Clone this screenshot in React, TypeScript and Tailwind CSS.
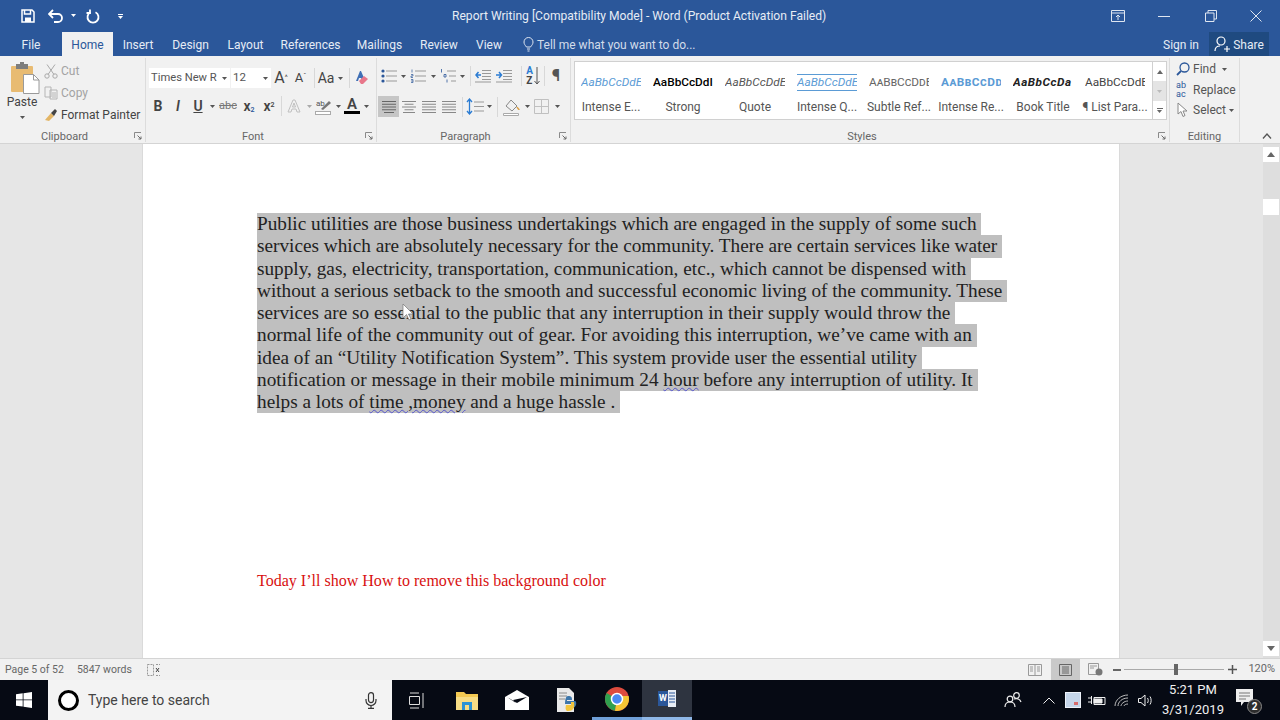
import type { ReactNode } from 'react';

const UI = "font-['Roboto','Liberation_Sans',sans-serif]";

/** tiny dropdown caret */
function Drop({ color = '#555' }: { color?: string }) {
  return (
    <svg width="5" height="3" viewBox="0 0 5 3">
      <path d="M0 0h5L2.5 3z" fill={color} />
    </svg>
  );
}

/** fixed-width cell, keeps toolbar items centred on their column */
function Slot({ w, children, className = '' }: { w: string; children?: ReactNode; className?: string }) {
  return <div className={`${w} h-[20px] flex items-center justify-center shrink-0 ${className}`}>{children}</div>;
}

function Sep() {
  return <div className="w-px h-[20px] bg-[#d8d8d8] shrink-0" />;
}

function Launcher() {
  return (
    <svg width="8" height="8" viewBox="0 0 8 8" className="absolute right-[3px] bottom-[2px]" fill="none" stroke="#8a8a8a">
      <path d="M.5 6V.5H7" />
      <path d="M3.5 3.500L7 7M7 4.500V7H4.500" stroke="#6a6a6a" />
    </svg>
  );
}

function Group({ w, label, children, launcher = true }: { w: string; label: string; children: ReactNode; launcher?: boolean }) {
  return (
    <div className={`${w} h-[84px] relative flex flex-col border-r border-[#dcdcdc] shrink-0`}>
      <div className="h-[70px] shrink-0">{children}</div>
      <div className={`text-center text-[11px] leading-[16px] pt-[1px] text-[#666] ${launcher ? 'pr-[16px]' : ''}`}>{label}</div>
      {launcher && <Launcher />}
    </div>
  );
}

function Lines({ widths, color = '#888' }: { widths: number[]; color?: string }) {
  return (
    <svg width="14" height="14" viewBox="0 0 14 14" stroke={color} fill="none">
      {widths.map((w, i) => (
        <path key={i} d={`M${(14 - w) / 2} ${1.5 + (i * 11) / (widths.length - 1)}h${w}`} />
      ))}
    </svg>
  );
}

function ListIcon({ kind }: { kind: 'bullet' | 'number' | 'multi' }) {
  return (
    <svg width="16" height="14" viewBox="0 0 16 14" fill="none" stroke="#999">
      <path d={kind === 'multi' ? 'M7 2h9M9 7h7M11 12h5' : 'M5 2h11M5 7h11M5 12h11'} />
      {kind === 'bullet' && (
        <g fill="#2b579a" stroke="none">
          <circle cx="2" cy="2" r="1.6" />
          <circle cx="2" cy="7" r="1.6" />
          <circle cx="2" cy="12" r="1.6" />
        </g>
      )}
      {kind === 'number' && (
        <g stroke="#2b579a">
          <path d="M2 .5v3M1 5.500h2v1.500h-2v1.500h2M1 10.500h2v3h-2M1 12h2" strokeWidth=".7" />
        </g>
      )}
      {kind === 'multi' && (
        <g stroke="#2b579a" strokeWidth=".8">
          <path d="M1.500 0v3.500M4 5.500h2v2.500h-2zM7 10.500v3" />
        </g>
      )}
    </svg>
  );
}

function PasteIcon() {
  return (
    <svg width="30" height="32" viewBox="0 0 30 32">
      <rect x="1" y="4" width="22" height="26" rx="1" fill="#e8bb72" />
      <rect x="6" y="2" width="12" height="5" fill="#7d7d7d" />
      <rect x="10" y="0" width="4" height="3" fill="#7d7d7d" />
      <path d="M13.500 12.500h10l5.500 5.500v13.500h-15.500z" fill="#fff" stroke="#9a9a9a" />
      <path d="M23.500 12.500v5.500h5.500" fill="none" stroke="#9a9a9a" />
    </svg>
  );
}

function Clipboard() {
  return (
    <div className="flex h-full">
      <div className="w-[44px] flex flex-col items-center pt-[4px] shrink-0">
        <div className="h-[32px] pl-[6px]">
          <PasteIcon />
        </div>
        <div className="text-[12px] leading-[16px] text-[#444]">Paste</div>
        <div className="mt-[6px]">
          <Drop />
        </div>
      </div>
      <div className="flex flex-col pt-[2px] text-[12px] leading-[22px]">
        <div className="flex items-center text-[#a3a3a3]">
          <svg width="14" height="15" viewBox="0 0 14 15" fill="none" stroke="#a9a9a9">
            <path d="M3 .5l7 10M11 .5l-7 10" />
            <circle cx="3" cy="12" r="2.200" />
            <circle cx="11" cy="12" r="2.200" />
          </svg>
          <span className="ml-[3px]">Cut</span>
        </div>
        <div className="flex items-center text-[#a3a3a3]">
          <svg width="14" height="14" viewBox="0 0 14 14" fill="none" stroke="#b5b5b5">
            <path d="M1 1h6v10H1zM6 4h7v9H6z" fill="#f1f1f1" />
            <path d="M8 7h4M8 9h4M8 11h4" />
          </svg>
          <span className="ml-[3px]">Copy</span>
        </div>
        <div className="flex items-center text-[#444]">
          <svg width="14" height="14" viewBox="0 0 14 14">
            <path d="M1 12l6-7 3 3-5 5z" fill="#e3b565" />
            <path d="M7 5l4-4 2 2-3 5z" fill="#444" />
          </svg>
          <span className="ml-[3px] whitespace-nowrap">Format Painter</span>
        </div>
      </div>
    </div>
  );
}

function FontGroup() {
  return (
    <div className="pl-[3px] pt-[10px]">
      <div className="flex items-center h-[20px]">
        <div className="w-[81px] h-[20px] bg-white flex items-center justify-between pl-[2px] pr-[3px] text-[11.200px] text-[#555] whitespace-nowrap overflow-hidden">
          <span>Times New R</span>
          <Drop />
        </div>
        <div className="w-[40px] h-[20px] ml-px bg-white flex items-center justify-between pl-[2px] pr-[3px] text-[11.500px] text-[#555]">
          <span>12</span>
          <Drop />
        </div>
        <Slot w="w-[20px]">
          <span className="text-[16px] text-[#444]">A<sup className="text-[7px]">^</sup></span>
        </Slot>
        <Slot w="w-[19px]">
          <span className="text-[13px] text-[#444]">A<sup className="text-[7px]">ˇ</sup></span>
        </Slot>
        <Slot w="w-[4px]" />
        <Sep />
        <Slot w="w-[22px]">
          <span className="text-[14px] text-[#444]">Aa</span>
        </Slot>
        <Slot w="w-[6px]">
          <Drop />
        </Slot>
        <Slot w="w-[6px]" />
        <Sep />
        <Slot w="w-[24px]">
          <svg width="14" height="14" viewBox="0 0 14 14">
            <path d="M5 0L1 10h2l1-3h2l1 2 2-2-3-7z" fill="#3f6fb5" />
            <path d="M4 10l5-5 4 3-5 5H6z" fill="#e8778a" />
          </svg>
        </Slot>
      </div>
      <div className="flex items-center h-[20px] mt-[8px] text-[#444]">
        <Slot w="w-[18px]">
          <span className="text-[14px] font-bold">B</span>
        </Slot>
        <Slot w="w-[22px]">
          <span className="text-[14px] italic font-semibold">I</span>
        </Slot>
        <Slot w="w-[18px]">
          <span className="text-[14px] underline font-semibold">U</span>
        </Slot>
        <Slot w="w-[10px]">
          <Drop />
        </Slot>
        <Slot w="w-[22px]">
          <span className="text-[11px] line-through text-[#777]">abc</span>
        </Slot>
        <Slot w="w-[20px]">
          <span className="text-[14px] font-semibold">x<sub className="text-[7px] text-[#2b579a]">2</sub></span>
        </Slot>
        <Slot w="w-[20px]">
          <span className="text-[14px] font-semibold">x<sup className="text-[7px]">2</sup></span>
        </Slot>
        <Slot w="w-[4px]">
          <Sep />
        </Slot>
        <Slot w="w-[22px]">
          <svg width="14" height="14" viewBox="0 0 14 14" fill="none" stroke="#c0c0c0">
            <path d="M1 13L6 1h2l5 12h-3L9 10H5l-1 3zM5.500 8h3L7 4z" />
          </svg>
        </Slot>
        <Slot w="w-[8px]">
          <Drop color="#aaa" />
        </Slot>
        <Slot w="w-[20px]">
          <svg width="17" height="17" viewBox="0 0 17 17" fill="none">
            <text x="1" y="8" fontSize="8" fill="#555">ab</text>
            <path d="M6 11l8-8 2 2-8 7z" fill="#777" />
            <rect x=".5" y="13.500" width="15" height="3" fill="#fff" stroke="#aaa" />
          </svg>
        </Slot>
        <Slot w="w-[10px]">
          <Drop />
        </Slot>
        <Slot w="w-[18px]">
          <div className="flex flex-col items-center -mt-[1px]">
            <span className="text-[15px] leading-[14px] font-semibold text-[#444]">A</span>
            <div className="w-[16px] h-[3px] bg-black" />
          </div>
        </Slot>
        <Slot w="w-[10px]">
          <Drop />
        </Slot>
      </div>
    </div>
  );
}

function ParagraphGroup() {
  return (
    <div className="pl-[1px] pt-[8px]">
      <div className="flex items-center h-[20px]">
        <Slot w="w-[22px]">
          <ListIcon kind="bullet" />
        </Slot>
        <Slot w="w-[6px]">
          <Drop />
        </Slot>
        <Slot w="w-[24px]">
          <ListIcon kind="number" />
        </Slot>
        <Slot w="w-[6px]">
          <Drop />
        </Slot>
        <Slot w="w-[1px]" />
        <Slot w="w-[22px]">
          <ListIcon kind="multi" />
        </Slot>
        <Slot w="w-[6px]">
          <Drop />
        </Slot>
        <Slot w="w-[5px]" />
        <Sep />
        <Slot w="w-[23px]">
          <svg width="16" height="14" viewBox="0 0 16 14" fill="none" stroke="#999">
            <path d="M7 1.500h9M7 4.500h9M7 7.500h9M7 10.500h9M0 13h16" />
            <path d="M6 6H1M3.500 3L1 6l2.500 3" stroke="#2b7cd3" strokeWidth="1.500" />
          </svg>
        </Slot>
        <Slot w="w-[20px]">
          <svg width="16" height="14" viewBox="0 0 16 14" fill="none" stroke="#999">
            <path d="M7 1.500h9M7 4.500h9M7 7.500h9M7 10.500h9M0 13h16" />
            <path d="M0 6h5M3 3l2.500 3L3 9" stroke="#2b7cd3" strokeWidth="1.500" />
          </svg>
        </Slot>
        <Slot w="w-[7px]" />
        <Sep />
        <Slot w="w-[22px]">
          <span className="text-[10px] leading-[10px] font-bold text-[#2b7cd3] flex flex-col mr-[1px]">
            <span>A</span>
            <span className="text-[#444]">Z</span>
          </span>
          <svg width="6" height="18" viewBox="0 0 6 18" fill="none" stroke="#555">
            <path d="M3 0v17M.5 14L3 17l2.500-3" />
          </svg>
        </Slot>
        <Sep />
        <Slot w="w-[22px]">
          <span className="text-[17px] font-semibold text-[#555]">¶</span>
        </Slot>
      </div>
      <div className="flex items-center h-[21px] mt-[10px]">
        <Slot w="w-[21px]" className="bg-[#c6c6c6] !h-[21px]">
          <Lines widths={[14, 14, 14, 14, 10]} color="#666" />
        </Slot>
        <Slot w="w-[20px]">
          <Lines widths={[14, 9, 14, 9, 12]} />
        </Slot>
        <Slot w="w-[20px]">
          <Lines widths={[14, 14, 14, 14, 14]} />
        </Slot>
        <Slot w="w-[20px]">
          <Lines widths={[14, 14, 14, 14, 14]} />
        </Slot>
        <Slot w="w-[3px]" />
        <Sep />
        <Slot w="w-[23px]">
          <svg width="18" height="17" viewBox="0 0 18 17" fill="none" stroke="#999">
            <path d="M8 4h10M8 8.500h10M8 13h10" />
            <path d="M3.500 1v15M1 4l2.500-3L6 4M1 13l2.500 3L6 13" stroke="#2b7cd3" strokeWidth="1.300" />
          </svg>
        </Slot>
        <Slot w="w-[6px]">
          <Drop />
        </Slot>
        <Slot w="w-[5px]" />
        <Sep />
        <Slot w="w-[27px]">
          <svg width="17" height="18" viewBox="0 0 17 18" fill="none" stroke="#888">
            <path d="M3 8l5-6 6 6-5 5z" />
            <path d="M14 9c1 2 2 2 2 3" stroke="#d9a04a" strokeWidth="1.500" />
            <path d="M.5 15.500h15v2H.5z" fill="#fff" stroke="#aaa" />
          </svg>
        </Slot>
        <Slot w="w-[5px]">
          <Drop />
        </Slot>
        <Slot w="w-[22px]">
          <svg width="15" height="15" viewBox="0 0 15 15" fill="none" stroke="#c0c0c0">
            <path d="M.5.500h14v14H.5zM7.500.5v14M.5 7.500h14" />
          </svg>
        </Slot>
        <Slot w="w-[10px]">
          <Drop />
        </Slot>
      </div>
    </div>
  );
}

const GALLERY = [
  { sample: 'AaBbCcDdE', cls: 'leading-[17px] italic text-[#5b9bd5]', name: 'Intense E...' },
  { sample: 'AaBbCcDdI', cls: 'leading-[17px] font-medium text-black', name: 'Strong' },
  { sample: 'AaBbCcDdE', cls: 'leading-[17px] italic text-[#555]', name: 'Quote' },
  { sample: 'AaBbCcDdE', cls: 'leading-[15px] italic text-[#5b9bd5] border-y border-[#5b9bd5]', name: 'Intense Q...' },
  { sample: 'AaBbCcDdE', cls: 'leading-[17px] [font-variant:small-caps] text-[#666]', name: 'Subtle Ref...' },
  { sample: 'AaBbCcDd', cls: 'leading-[17px] [font-variant:small-caps] font-bold tracking-[0.5px] text-[#5b9bd5]', name: 'Intense Re...' },
  { sample: 'AaBbCcDa', cls: 'leading-[17px] italic font-bold text-[#222] tracking-[0.5px]', name: 'Book Title' },
  { sample: 'AaBbCcDdE', cls: 'leading-[17px] text-[#444]', name: '¶ List Para...' },
];

function Styles() {
  return (
    <div className="pl-[3px] pt-[3px] flex">
      <div className="w-[579px] h-[59px] bg-white border border-[#d0d0d0] flex shrink-0">
        {GALLERY.map((g, i) => (
          <div key={i} className="w-[72px] shrink-0 flex flex-col items-center pt-[12px]">
            <div className="w-[60px] overflow-hidden">
              <div className={`text-[11.800px] whitespace-nowrap ${g.cls}`}>{g.sample}</div>
            </div>
            <div className="text-[12px] leading-[16px] mt-[8px] text-[#555] whitespace-nowrap">{g.name}</div>
          </div>
        ))}
      </div>
      <div className="w-[14px] h-[59px] flex flex-col bg-white border-y border-r border-[#d0d0d0]">
        <div className="h-[19px] flex items-center justify-center">
          <svg width="6" height="4" viewBox="0 0 6 4"><path d="M0 4l3-4 3 4z" fill="#666" /></svg>
        </div>
        <div className="h-[20px] flex items-center justify-center bg-[#e4e4e4]">
          <Drop color="#bbb" />
        </div>
        <div className="h-[18px] flex flex-col items-center justify-center gap-[1px]">
          <div className="w-[6px] h-px bg-[#666]" />
          <Drop color="#666" />
        </div>
      </div>
    </div>
  );
}

function Editing() {
  return (
    <div className="pt-[1px] pl-[6px] text-[12px] leading-[20.500px] text-[#555]">
      <div className="flex items-center">
        <svg width="14" height="14" viewBox="0 0 14 14" fill="none" stroke="#2b579a" strokeWidth="1.300">
          <circle cx="8.500" cy="5.500" r="4.500" />
          <path d="M5 9l-4 4" strokeWidth="1.800" />
        </svg>
        <span className="ml-[3px]">Find</span>
        <span className="ml-[6px]"><Drop /></span>
      </div>
      <div className="flex items-center">
        <span className="w-[14px] text-[9px] leading-[9px] text-[#2b579a] flex flex-col">
          <span>ab</span>
          <span>ac</span>
        </span>
        <span className="ml-[3px]">Replace</span>
      </div>
      <div className="flex items-center">
        <svg width="14" height="16" viewBox="0 0 14 16" fill="#fff" stroke="#888">
          <path d="M2 1v11l3-2.500 2 5 2-1-2-4.500h4z" />
        </svg>
        <span className="ml-[3px]">Select</span>
        <span className="ml-[3px]"><Drop /></span>
      </div>
    </div>
  );
}

const TABS = [
  ['File', 'w-[62px]'],
  ['Home', 'w-[51px]'],
  ['Insert', 'w-[50px]'],
  ['Design', 'w-[55px]'],
  ['Layout', 'w-[55px]'],
  ['References', 'w-[75px]'],
  ['Mailings', 'w-[63px]'],
  ['Review', 'w-[56px]'],
  ['View', 'w-[44px]'],
];

function TitleBar() {
  return (
    <div className="h-[32px] bg-[#2b579a] flex items-center text-white shrink-0">
      <div className="w-[452px] flex items-center pl-[21px] shrink-0">
        <svg width="14" height="14" viewBox="0 0 14 14" fill="none" stroke="#fff" strokeWidth="1.500">
          <path d="M1 1h10l2 2v10H1z" />
          <path d="M3.500 1v4h6V1" />
          <path d="M4 13V8.500h6V13" fill="#fff" stroke="none" />
        </svg>
        <svg width="16" height="14" viewBox="0 0 16 14" fill="none" stroke="#fff" strokeWidth="1.800" className="ml-[13px]">
          <path d="M1 5h9a4 4 0 0 1 0 8H6" />
          <path d="M5 1L1 5l4 4" />
        </svg>
        <span className="ml-[7px] -mt-[1px]"><Drop color="#fff" /></span>
        <svg width="14" height="15" viewBox="0 0 14 15" fill="none" stroke="#fff" strokeWidth="1.800" className="ml-[10px]">
          <path d="M9.500 3.200a5.500 5.500 0 1 1-5 0" />
          <path d="M4 .5v3.500h-3.500" />
        </svg>
        <div className="ml-[18px] flex flex-col items-center gap-[1px]">
          <div className="w-[5px] h-px bg-white" />
          <Drop color="#fff" />
        </div>
      </div>
      <div className={`${UI} text-[12.100px] pt-[1px] text-[#e6ecf5] whitespace-nowrap`}>
        Report Writing [Compatibility Mode] - Word (Product Activation Failed)
      </div>
      <div className="ml-auto flex items-center pr-[18px] shrink-0">
        <svg width="14" height="12" viewBox="0 0 14 12" fill="none" stroke="#dfe6f1">
          <path d="M.5.500h13v11H.5zM.5 3h13M7 10V5M5 7l2-2 2 2" />
        </svg>
        <div className="w-[12px] h-px bg-[#dfe6f1] ml-[33px]" />
        <svg width="12" height="12" viewBox="0 0 12 12" fill="none" stroke="#dfe6f1" className="ml-[35px]">
          <path d="M.5 3h8.500v8.500H.5zM3 3V.5h8.500V9H9" />
        </svg>
        <svg width="12" height="12" viewBox="0 0 12 12" fill="none" stroke="#dfe6f1" className="ml-[33px]">
          <path d="M.5.500l11 11M11.500.5l-11 11" />
        </svg>
      </div>
    </div>
  );
}

function TabRow() {
  return (
    <div className={`${UI} h-[24px] bg-[#2b579a] flex items-stretch text-[12px] text-[#e6ecf5] shrink-0`}>
      {TABS.map(([name, w]) => (
        <div
          key={name}
          className={`${w} flex items-center justify-center pt-[1px] shrink-0 ${name === 'Home' ? 'bg-[#f1f1f1] text-[#2b579a]' : ''}`}
        >
          {name}
        </div>
      ))}
      <svg width="11" height="15" viewBox="0 0 11 15" fill="none" stroke="#dfe6f1" className="ml-[12px] self-center">
        <path d="M3.500 10C2 8 1 7 1 5a4.500 4.500 0 0 1 9 0c0 2-1 3-2.500 5zM4 12h3M4.500 14h2" />
      </svg>
      <div className="ml-[3px] self-center pt-[1px] text-[#d3dcea]">Tell me what you want to do...</div>
      <div className="ml-auto flex items-stretch pr-[11px]">
        <div className="flex items-center pt-[1px] mr-[10px]">Sign in</div>
        <div className="w-[60px] bg-[#1f4a80] flex items-center justify-center">
          <svg width="16" height="16" viewBox="0 0 16 16" fill="none" stroke="#fff" strokeWidth="1.200">
            <circle cx="7" cy="5" r="4" />
            <path d="M1 15c0-3 2-5 5-5M10 13h6M13 10v6" />
          </svg>
          <span className="ml-[3px] pt-[1px]">Share</span>
        </div>
      </div>
    </div>
  );
}

function Ribbon() {
  return (
    <div className={`${UI} h-[88px] bg-[#f1f1f1] border-b border-[#d4d4d4] flex items-start pt-[2px] shrink-0 relative`}>
      <Group w="w-[146px]" label="Clipboard">
        <Clipboard />
      </Group>
      <Group w="w-[231px]" label="Font">
        <FontGroup />
      </Group>
      <Group w="w-[194px]" label="Paragraph">
        <ParagraphGroup />
      </Group>
      <Group w="w-[599px]" label="Styles">
        <Styles />
      </Group>
      <Group w="w-[70px]" label="Editing" launcher={false}>
        <Editing />
      </Group>
      <svg width="10" height="6" viewBox="0 0 10 6" fill="none" stroke="#555" strokeWidth="1.300" className="absolute right-[8px] bottom-[4px]">
        <path d="M1 5.500l4-4.500 4 4.500" />
      </svg>
    </div>
  );
}

const DOC_LINES: ReactNode[] = [
  'Public utilities are those business undertakings which are engaged in the supply of some such ',
  'services which are absolutely necessary for the community. There are certain services like water ',
  'supply, gas, electricity, transportation, communication, etc., which cannot be dispensed with ',
  'without a serious setback to the smooth and successful economic living of the community. These ',
  'services are so essential to the public that any interruption in their supply would throw the ',
  'normal life of the community out of gear. For avoiding this interruption, we’ve came with an ',
  'idea of an “Utility Notification System”. This system provide user the essential utility ',
  <>notification or message in their mobile minimum 24 <span className="underline decoration-wavy decoration-[#5555cc] decoration-1">hour</span> before any interruption of utility. It </>,
  <>helps a lots of <span className="underline decoration-wavy decoration-[#5555cc] decoration-1">time ,money</span> and a huge hassle . </>,
];

function Document() {
  return (
    <div className="flex-1 min-h-0 flex bg-[#e6e6e6] overflow-hidden">
      <div className="w-[142px] shrink-0" />
      <div className="w-[978px] bg-white border-l border-r border-[#dadada] shrink-0 relative pl-[114px] pt-[69px] font-['Liberation_Serif',serif] text-[19.250px] leading-[22.250px] text-[#222]">
        {DOC_LINES.map((line, i) => (
          <div key={i} className="w-fit bg-[#bfbfbf] whitespace-pre">
            {line}
          </div>
        ))}
        <div className="mt-[157px] text-[#d81010] text-[16.050px]">Today I’ll show How to remove this background color</div>
        <svg width="12" height="18" viewBox="0 0 12 18" className="absolute left-[259px] top-[159px]">
          <path d="M1 1v14l3.500-3.500 2.500 5.500 2-1-2.500-5H11z" fill="#fff" stroke="#777" strokeWidth=".7" />
        </svg>
      </div>
      <div className="w-[143px] shrink-0" />
      <div className="w-[17px] bg-[#dedede] flex flex-col shrink-0 pt-[3px] pb-[2px] pr-px">
        <div className="h-[15px] w-full flex items-center justify-center bg-white">
          <svg width="8" height="5" viewBox="0 0 8 5"><path d="M0 5l4-5 4 5z" fill="#666" /></svg>
        </div>
        <div className="w-full flex-1 flex flex-col">
          <div className="h-[37px]" />
          <div className="h-[16px] bg-white" />
          <div className="flex-1" />
        </div>
        <div className="h-[15px] w-full flex items-center justify-center bg-white">
          <svg width="8" height="5" viewBox="0 0 8 5"><path d="M0 0l4 5 4-5z" fill="#666" /></svg>
        </div>
      </div>
    </div>
  );
}

function StatusBar() {
  return (
    <div className={`${UI} h-[22px] bg-[#f1f1f1] border-t border-[#d4d4d4] flex items-center text-[10.500px] text-[#666] shrink-0`}>
      <span className="ml-[5px]">Page 5 of 52</span>
      <span className="ml-[13px]">5847 words</span>
      <svg width="14" height="12" viewBox="0 0 14 12" fill="none" stroke="#999" className="ml-[15px]">
        <path d="M.5.500h6v11h-6zM9 .5h4M9 11.500h4" strokeDasharray="2 1" />
        <path d="M9 4l3 4M12 4l-3 4" stroke="#444" />
      </svg>
      <div className="ml-auto flex items-center h-full">
        <svg width="14" height="12" viewBox="0 0 14 12" fill="none" stroke="#999">
          <path d="M.5.500h13v11H.5zM7 .5v11M2 3h3M2 5h3M2 7h3M9 3h3M9 5h3M9 7h3" />
        </svg>
        <div className="w-[29px] h-full bg-[#c9c9c9] flex items-center justify-center ml-[9px]">
          <svg width="13" height="12" viewBox="0 0 13 12" fill="none" stroke="#666">
            <path d="M.5.500h12v11H.5zM3 3h7M3 5h7M3 7h7M3 9h7" />
          </svg>
        </div>
        <svg width="15" height="13" viewBox="0 0 15 13" fill="none" stroke="#999" className="ml-[8px]">
          <path d="M.5.500h10v11H.5zM2 3h7M2 5h4" />
          <circle cx="11" cy="9" r="3.500" fill="#777" stroke="none" />
        </svg>
        <div className="w-[8px] h-[2px] bg-[#666] ml-[10px]" />
        <div className="w-[100px] h-px bg-[#aaa] ml-[3px] flex items-center justify-center">
          <div className="w-[4px] h-[11px] bg-[#666] shrink-0 ml-[4px]" />
        </div>
        <svg width="9" height="9" viewBox="0 0 9 9" stroke="#555" strokeWidth="1.500" className="ml-[4px]">
          <path d="M0 4.500h9M4.500 0v9" />
        </svg>
        <span className="ml-[11px] mr-[5px] text-[11px] text-[#666]">120%</span>
      </div>
    </div>
  );
}

function TaskIcon({ children, active = false }: { children: ReactNode; active?: boolean }) {
  return (
    <div className={`w-[50px] flex items-center justify-center shrink-0 ${active ? 'border-b-[3px] border-[#6f9fd8]' : ''}`}>
      {children}
    </div>
  );
}

function NotifIcon() {
  return (
    <div className="relative w-[22px] h-[24px]">
      <svg width="20" height="19" viewBox="0 0 20 19" className="mt-[1px]">
        <path d="M0 0h17v13H8l-3 4v-4H0z" fill="#eee" />
        <path d="M3 4h11M3 7h11M3 10h7" stroke="#777" />
      </svg>
      <div className="absolute right-[-4px] bottom-[-2px] w-[15px] h-[15px] rounded-full bg-[#2d2d2d] border border-[#888] flex items-center justify-center text-[10px] font-bold">
        2
      </div>
    </div>
  );
}

function Taskbar() {
  return (
    <div className={`${UI} h-[40px] bg-[#060a14] flex items-stretch text-white shrink-0`}>
      <div className="w-[48px] flex items-center justify-center shrink-0">
        <svg width="16" height="16" viewBox="0 0 16 16" fill="#fff">
          <path d="M0 2.300l6.700-1v6.200H0zM7.500 1.200L16 0v7.500H7.500zM0 8.300h6.700v6.300L0 13.700zM7.500 8.300H16V16l-8.500-1.200z" />
        </svg>
      </div>
      <div className="w-[344px] bg-[#f3f3f3] flex items-center shrink-0">
        <div className="ml-[10px] w-[21px] h-[21px] rounded-full border-[3px] border-black bg-white" />
        <span className="ml-[9px] pt-[1px] text-[14px] text-[#444]">Type here to search</span>
        <svg width="12" height="17" viewBox="0 0 12 17" fill="none" stroke="#333" strokeWidth="1.200" className="ml-auto mr-[15px]">
          <rect x="3.500" y=".6" width="5" height="10" rx="2.500" />
          <path d="M1 7v1.500a5 5 0 0 0 10 0V7M6 13.500V16M3 16.400h6" />
        </svg>
      </div>
      <TaskIcon>
        <svg width="16" height="17" viewBox="0 0 16 17" fill="none" stroke="#ddd">
          <path d="M.5 4.500h10v8H.5zM1 1h9M1 16h9M14 1v15" />
        </svg>
      </TaskIcon>
      <TaskIcon>
        <svg width="22" height="20" viewBox="0 0 22 20">
          <path d="M0 2h8l2 2h12v16H0z" fill="#f3c952" />
          <path d="M0 7h22v13H0z" fill="#f7dd85" />
          <path d="M6 12h10v8h-3v-5H9v5H6z" fill="#2a93d5" />
        </svg>
      </TaskIcon>
      <TaskIcon>
        <svg width="24" height="20" viewBox="0 0 24 20">
          <path d="M0 7L12 0l12 7v13H0z" fill="#fff" />
          <path d="M2 7l10 6 10-6-14 3 3 3z" fill="#060a14" />
        </svg>
      </TaskIcon>
      <TaskIcon>
        <svg width="22" height="24" viewBox="0 0 22 24">
          <path d="M1 0h12l5 5v19H1z" fill="#e9e9e9" />
          <path d="M3 5h8M3 8h8M3 11h6" stroke="#8a8a8a" />
          <path d="M12 8c4 0 4 2 4 4h-5v1h8c2 0 2 7-3 7h-1v-4H9c0-5 1-8 3-8z" fill="#3d76ab" />
          <path d="M12 23c5 0 7-3 6-9h-3v3h-5c-1 4 0 6 2 6z" fill="#f2c53d" />
        </svg>
      </TaskIcon>
      <TaskIcon active>
        <svg width="24" height="24" viewBox="0 0 24 24">
          <circle cx="12" cy="12" r="12" fill="#dd4b3e" />
          <path d="M12 12L1.600 6a12 12 0 0 0 8.400 17.800z" fill="#2fa04f" />
          <path d="M12 12l-2 11.800A12 12 0 0 0 23.600 9H12z" fill="#f4c534" />
          <circle cx="12" cy="12" r="5.500" fill="#4a8af4" stroke="#fff" strokeWidth="1.500" />
        </svg>
      </TaskIcon>
      <div className="w-[50px] bg-[#2e3440] border-b-[3px] border-[#8fb8e8] flex items-center justify-center shrink-0">
        <div className="w-[10px] h-[15px] bg-[#2b579a] flex items-center justify-center text-[9px] font-bold leading-none">W</div>
        <svg width="8" height="17" viewBox="0 0 8 17" fill="#e8edf5">
          <path d="M0 0h8v17H0z" />
          <path d="M1 3h6M1 6h6M1 9h6M1 12h6" stroke="#2b579a" />
        </svg>
      </div>
      <div className="ml-auto flex items-center shrink-0">
        <svg width="18" height="16" viewBox="0 0 18 16" fill="none" stroke="#eee" strokeWidth="1.200">
          <circle cx="6" cy="7" r="2.800" />
          <circle cx="12.500" cy="3.500" r="2.800" />
          <path d="M1 15c0-3 2-5 5-5s5 2 5 5M10 7c3-1 6 0 7 3" />
        </svg>
        <svg width="12" height="7" viewBox="0 0 12 7" fill="none" stroke="#eee" className="ml-[21px]">
          <path d="M.5 6.500L6 1l5.500 5.500" />
        </svg>
        <div className="ml-[10px] w-[16px] h-[16px] bg-[#c5d6ea] border border-[#eef3fa] flex items-end justify-end">
          <div className="w-[4px] h-[3px] bg-[#d76b6b] mb-[2px] mr-[2px]" />
        </div>
        <svg width="18" height="12" viewBox="0 0 18 12" fill="none" stroke="#eee" className="ml-[7px]">
          <path d="M6 3.500h11v7H6zM0 4h4M0 8h4M3.500 2v8" />
          <path d="M6 5h8v4H6z" fill="#eee" />
        </svg>
        <svg width="15" height="13" viewBox="0 0 15 13" fill="none" stroke="#bbb" className="ml-[8px]">
          <path d="M1 12C1 6 7 1 14 1M4 12c0-4 4-8 10-8M7 12c0-2 3-5 7-5M10 12c0-1 2-2 4-2" />
        </svg>
        <svg width="15" height="13" viewBox="0 0 15 13" fill="none" stroke="#eee" className="ml-[9px]">
          <path d="M.5 4.500h2.500L7 1v11L3 8.500H.5zM9.500 4c1 1.500 1 3.500 0 5M12 2.500c1.500 2 1.500 6 0 8" />
        </svg>
        <div className="w-[80px] text-center text-[13px] leading-[20px] text-[#f0f0f0]">
          <div>5:21 PM</div>
          <div>3/31/2019</div>
        </div>
        <div className="w-[28px] flex items-center justify-center">
          <NotifIcon />
        </div>
        <div className="w-[19px]" />
      </div>
    </div>
  );
}

export default function App() {
  return (
    <div className="w-[1280px] h-[720px] flex flex-col overflow-hidden bg-[#e6e6e6]">
      <TitleBar />
      <TabRow />
      <Ribbon />
      <Document />
      <StatusBar />
      <Taskbar />
    </div>
  );
}
